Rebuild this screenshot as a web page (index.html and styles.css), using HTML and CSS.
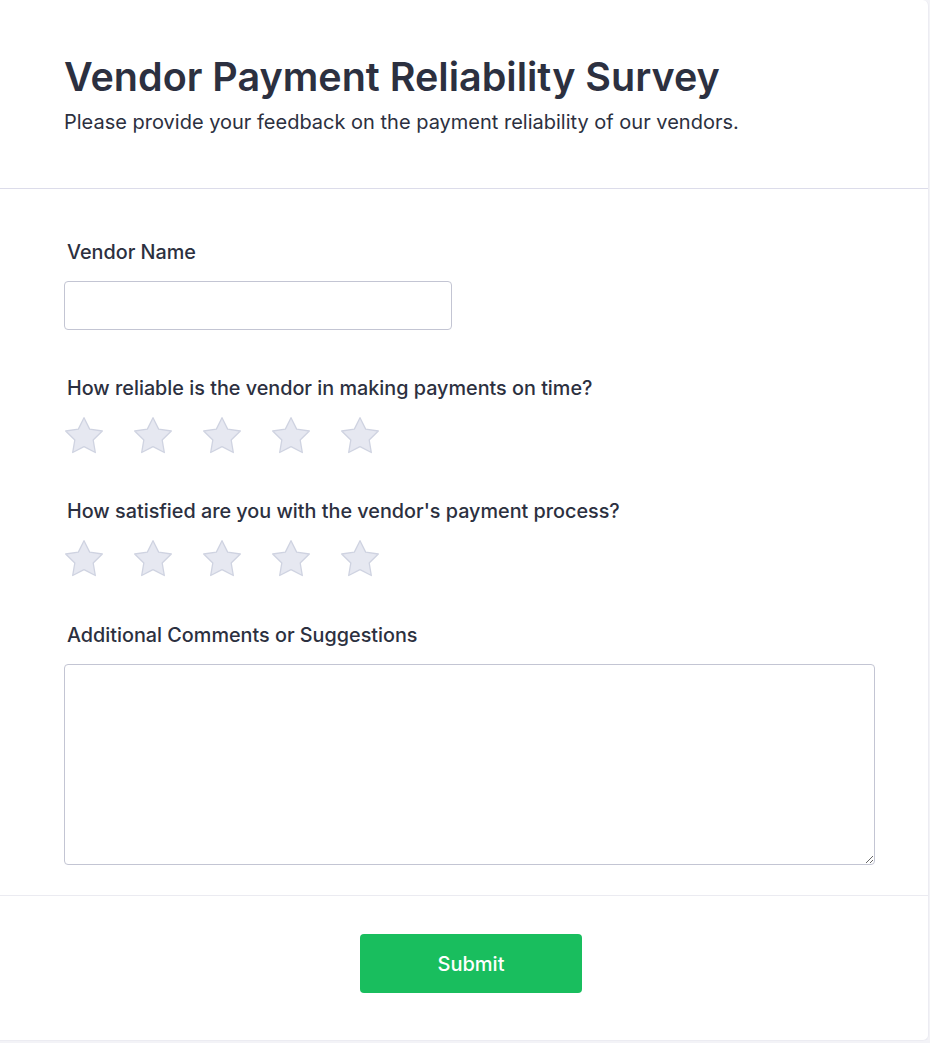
FILE: index.html
```html
<!DOCTYPE html>
<html lang="en">
<head>
  <meta charset="UTF-8">
  <meta name="viewport" content="width=device-width, initial-scale=1.0">
  <title>Vendor Payment Reliability Survey</title>
  <link rel="stylesheet" href="styles.css">
</head>
<body>
  <div class="survey-card">
    <div class="survey-header">
      <h1 class="title">Vendor Payment Reliability Survey</h1>
      <p class="subtitle">Please provide your feedback on the payment reliability of our vendors.</p>
    </div>

    <form class="survey-form">
      <div class="field">
        <label class="field-label" for="vendor-name">Vendor Name</label>
        <input class="text-input" type="text" id="vendor-name">
      </div>

      <div class="field rating-field">
        <span class="field-label">How reliable is the vendor in making payments on time?</span>
        <div class="stars">
          <svg class="star" viewBox="0 0 24 24"><path d="M12 2l3.09 6.26L22 9.27l-5 4.87 1.18 6.88L12 17.77l-6.18 3.25L7 14.14 2 9.27l6.91-1.01L12 2z"/></svg>
          <svg class="star" viewBox="0 0 24 24"><path d="M12 2l3.09 6.26L22 9.27l-5 4.87 1.18 6.88L12 17.77l-6.18 3.25L7 14.14 2 9.27l6.91-1.01L12 2z"/></svg>
          <svg class="star" viewBox="0 0 24 24"><path d="M12 2l3.09 6.26L22 9.27l-5 4.87 1.18 6.88L12 17.77l-6.18 3.25L7 14.14 2 9.27l6.91-1.01L12 2z"/></svg>
          <svg class="star" viewBox="0 0 24 24"><path d="M12 2l3.09 6.26L22 9.27l-5 4.87 1.18 6.88L12 17.77l-6.18 3.25L7 14.14 2 9.27l6.91-1.01L12 2z"/></svg>
          <svg class="star" viewBox="0 0 24 24"><path d="M12 2l3.09 6.26L22 9.27l-5 4.87 1.18 6.88L12 17.77l-6.18 3.25L7 14.14 2 9.27l6.91-1.01L12 2z"/></svg>
        </div>
      </div>

      <div class="field rating-field">
        <span class="field-label">How satisfied are you with the vendor's payment process?</span>
        <div class="stars">
          <svg class="star" viewBox="0 0 24 24"><path d="M12 2l3.09 6.26L22 9.27l-5 4.87 1.18 6.88L12 17.77l-6.18 3.25L7 14.14 2 9.27l6.91-1.01L12 2z"/></svg>
          <svg class="star" viewBox="0 0 24 24"><path d="M12 2l3.09 6.26L22 9.27l-5 4.87 1.18 6.88L12 17.77l-6.18 3.25L7 14.14 2 9.27l6.91-1.01L12 2z"/></svg>
          <svg class="star" viewBox="0 0 24 24"><path d="M12 2l3.09 6.26L22 9.27l-5 4.87 1.18 6.88L12 17.77l-6.18 3.25L7 14.14 2 9.27l6.91-1.01L12 2z"/></svg>
          <svg class="star" viewBox="0 0 24 24"><path d="M12 2l3.09 6.26L22 9.27l-5 4.87 1.18 6.88L12 17.77l-6.18 3.25L7 14.14 2 9.27l6.91-1.01L12 2z"/></svg>
          <svg class="star" viewBox="0 0 24 24"><path d="M12 2l3.09 6.26L22 9.27l-5 4.87 1.18 6.88L12 17.77l-6.18 3.25L7 14.14 2 9.27l6.91-1.01L12 2z"/></svg>
        </div>
      </div>

      <div class="field">
        <label class="field-label" for="comments">Additional Comments or Suggestions</label>
        <textarea class="text-area" id="comments"></textarea>
      </div>
    </form>

    <div class="survey-footer">
      <button class="submit-button" type="button">Submit</button>
    </div>
  </div>
</body>
</html>
```

FILE: styles.css
```css
body {
  font-family: Inter, "Noto Sans", sans-serif;
  margin: 0;
  padding: 0;
  background-color: #f3f3f7;
  color: #2c3040;
}

.survey-card {
  width: 929px;
  height: 1041px;
  box-sizing: border-box;
  background-color: #fff;
  border-right: 1px solid #ececf2;
  border-bottom: 1px solid #ececf2;
  border-radius: 0 6px 6px 0;
}

.survey-header {
  padding: 53px 64px 51px;
  border-bottom: 1px solid #dcdcea;
}

.title {
  font-size: 39.5px;
  font-weight: 600;
  line-height: 48px;
  margin: 0 0 6px;
  color: #2c3040;
}

.subtitle {
  font-size: 20px;
  line-height: 1.5;
  margin: 0;
  color: #2c3040;
}

.survey-form {
  padding: 48px 53px 30px 64px;
  border-bottom: 1px solid #ebebf1;
}

.field {
  display: flex;
  flex-direction: column;
  align-items: flex-start;
  margin-bottom: 43px;
}

.rating-field {
  margin-bottom: 38px;
}

.rating-field + .rating-field {
  margin-bottom: 39px;
}

.field:last-child {
  margin-bottom: 0;
}

.field-label {
  font-size: 19.8px;
  font-weight: 500;
  line-height: 30px;
  padding-left: 3px;
  margin-bottom: 14px;
  color: #2c3040;
}

.stars {
  display: flex;
  gap: 25px;
  margin-left: -2px;
  margin-top: -3px;
}

.star {
  width: 44px;
  height: 44px;
}

.star path {
  fill: #e6e8f1;
  stroke: #cfd3e1;
  stroke-width: 0.7;
  stroke-linejoin: round;
}

.text-input {
  width: 388px;
  height: 49px;
  box-sizing: border-box;
  border: 1px solid #c3c5d3;
  border-radius: 4px;
  padding: 8px 12px;
  font-family: inherit;
  font-size: 16px;
}

.text-area {
  width: 100%;
  height: 201px;
  box-sizing: border-box;
  border: 1px solid #c3c5d3;
  border-radius: 4px;
  padding: 8px 12px;
  font-family: inherit;
  font-size: 16px;
}

.survey-footer {
  display: flex;
  justify-content: center;
  padding-top: 38px;
}

.submit-button {
  width: 222px;
  height: 59px;
  background-color: #19be5e;
  color: white;
  border: none;
  border-radius: 4px;
  font-family: inherit;
  font-size: 20px;
  font-weight: 500;
  cursor: pointer;
  margin-left: 14px;
}
```
